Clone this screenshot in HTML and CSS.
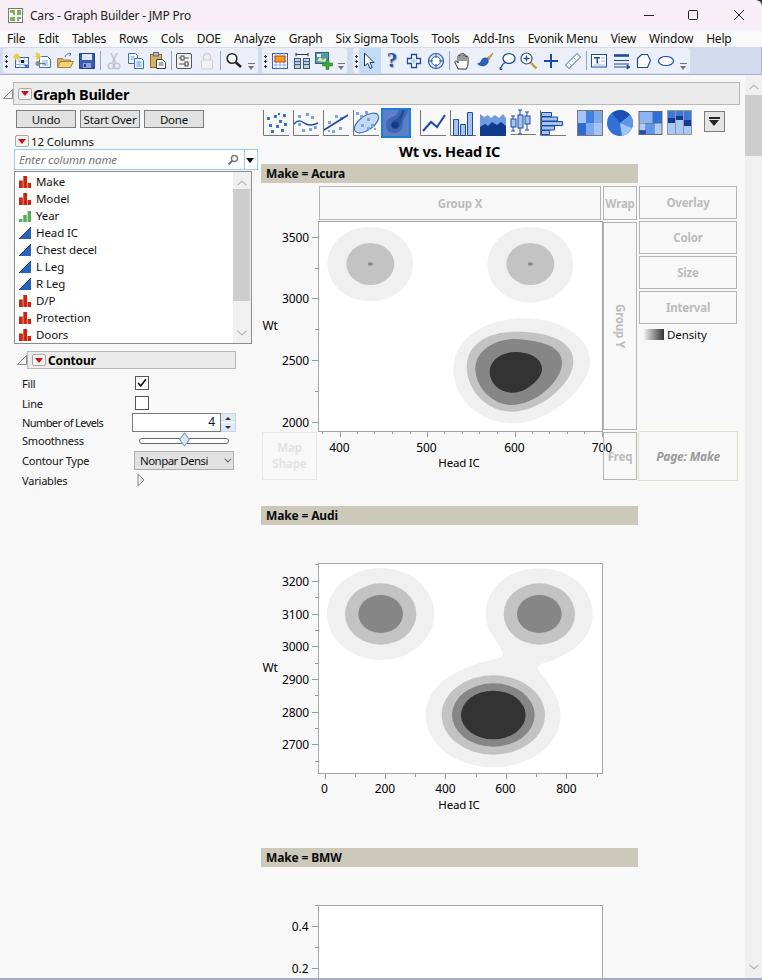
FILE: index.html
```html
<!DOCTYPE html>
<html lang="en">
<head>
<meta charset="utf-8">
<title>Cars - Graph Builder - JMP Pro</title>
<link rel="stylesheet" href="styles.css">
</head>
<body>
<svg class="defs" width="0" height="0" aria-hidden="true">
  <symbol id="nom" viewBox="0 0 12 12"><path d="M0 4.500h3.800V12H0zM4.300 0h3.800v12H4.300zM8.600 7H12v5H8.600z" fill="#c8260f"/></symbol>
  <symbol id="ord" viewBox="0 0 12 12"><path d="M0 9h3.500v3H0zM4.300 5h3.500v7H4.300zM8.600 1H12v11H8.600z" fill="#58b058"/></symbol>
  <symbol id="con" viewBox="0 0 12 12"><path d="M0 12 12 0v12z" fill="#2a62b8"/><path d="M0 12 12 0" stroke="#173f88" fill="none"/></symbol>
</svg>
<div class="window">
  <span class="corner"></span>
  <header class="titlebar">
    <svg class="appicon" viewBox="0 0 15 15"><rect x=".5" y=".5" width="14" height="14" fill="#fff" stroke="#777"/><path d="M2 2h5v5H5V5H2zM9 2h4v5H9zM2 9h5v4H2zM9 9h4v2h-2v2H9z" fill="#7db356"/></svg>
    <span class="titletext">Cars - Graph Builder - JMP Pro</span>
    <div class="winctl">
      <svg viewBox="0 0 10 10"><path d="M0 5.500h10" stroke="#222" fill="none"/></svg>
      <svg viewBox="0 0 10 10"><rect x=".5" y=".5" width="9" height="9" rx="1" stroke="#222" fill="none"/></svg>
      <svg viewBox="0 0 10 10"><path d="M0 0l10 10M10 0 0 10" stroke="#222" fill="none"/></svg>
    </div>
  </header>
  <nav class="menubar">
    <span>File</span><span>Edit</span><span>Tables</span><span>Rows</span><span>Cols</span><span>DOE</span><span>Analyze</span><span>Graph</span><span>Six Sigma Tools</span><span>Tools</span><span>Add-Ins</span><span>Evonik Menu</span><span>View</span><span>Window</span><span>Help</span>
  </nav>
  <div class="toolbar">
    <div class="seg seg1">
      <i class="grip"></i>
      <span class="slot"><svg class="ti" viewBox="0 0 18 18"><rect x="3.500" y="5.500" width="13" height="10" fill="#fff" stroke="#2a5fb5"/><path d="M3.500 9h13M3.500 12.500h13M8 5.500v10M12 5.500v10" stroke="#9cbce8"/><path d="M4 0l1 2.500 2.500-1L6.500 4l2.500 1-2.500 1 .5 2-2.500-1L3 8l-.5-2L0 5l2.500-1L2 1.500l2 1z" fill="#f2c83c"/><rect x="9" y="8" width="3" height="3" fill="#123"/><path d="M12 13l3 3 1-3z" fill="#2a5fb5"/></svg></span>
      <span class="slot"><svg class="ti" viewBox="0 0 18 18"><path d="M5.500 4.500h8l3 3v8h-11z" fill="#fff" stroke="#3a72c0"/><path d="M8 9h6M8 11h6M8 13h6" stroke="#7fa6e0"/><path d="M3 0l1 2 2-1-.5 2.500L8 4.500l-2.500 1L6 8 4 6.500 2 8l.5-2.500L0 4.500l2.500-1L2 1.500z" fill="#f2c83c"/><circle cx="4" cy="11.500" r="2.500" fill="#8c8c8c"/><path d="M5 11.500h6v2" stroke="#777" fill="none"/></svg></span>
      <span class="slot"><svg class="ti" viewBox="0 0 18 18"><path d="M1.500 6.500h5l1 1.500h7v7h-13z" fill="#d8b258" stroke="#a8843a"/><path d="M1.500 15.500l3-6h13l-3 6z" fill="#f0d27e" stroke="#a8843a"/><path d="M9 5c1-3 4-4 6-3M15 2l-1.500-1M15 2l-1.500 2" stroke="#3a72c0" fill="none"/></svg></span>
      <span class="slot"><svg class="ti" viewBox="0 0 18 18"><path d="M1.500 1.500h15v15h-15z" fill="#3c5cb0" stroke="#2a3f88"/><rect x="4" y="2" width="10" height="6" fill="#dfe6f6"/><rect x="5" y="11" width="8" height="5" fill="#8fa4d8"/><rect x="6" y="12" width="2" height="3" fill="#2a3f88"/></svg></span>
      <i class="sep"></i>
      <span class="slot"><svg class="ti" viewBox="0 0 18 18"><g stroke="#bcc3d2" stroke-width="1.600" fill="none"><path d="M6 1l4.500 10M12 1L7.500 11"/><circle cx="6" cy="14" r="2.800"/><circle cx="12" cy="14" r="2.800"/></g></svg></span>
      <span class="slot"><svg class="ti" viewBox="0 0 18 18"><path d="M1.500 1.500h7l2 2v8h-9z" fill="#fff" stroke="#3a72c0"/><path d="M7.500 6.500h7l2 2v8h-9z" fill="#eaf1fc" stroke="#3a72c0"/><path d="M9.500 10h5M9.500 12h5M9.500 14h5M3.500 5h4M3.500 7h3" stroke="#6d96d4"/></svg></span>
      <span class="slot"><svg class="ti" viewBox="0 0 18 18"><rect x="1.500" y="2.500" width="11" height="13" fill="#d9b45e" stroke="#8a6b28"/><rect x="4.500" y=".5" width="5" height="3.500" fill="#bbb" stroke="#666"/><path d="M7.500 7.500h6l3 3v6h-9z" fill="#fff" stroke="#3a3f50"/><path d="M9.500 11h5M9.500 13h5" stroke="#555"/></svg></span>
      <i class="sep"></i>
      <span class="slot"><svg class="ti" viewBox="0 0 18 18"><rect x=".5" y="1.500" width="15" height="15" rx="1.500" fill="#f2f2f2" stroke="#555"/><path d="M3 6h10M3 12h10" stroke="#555"/><rect x="5" y="4" width="3" height="4" fill="#fff" stroke="#444"/><rect x="9" y="10" width="3" height="4" fill="#fff" stroke="#444"/></svg></span>
      <span class="slot"><svg class="ti" viewBox="0 0 18 18"><path d="M5.500 8V5a3.500 3.500 0 0 1 7 0v3" stroke="#cfcfcf" stroke-width="1.400" fill="none"/><rect x="3.500" y="8" width="11" height="9" rx="1" fill="#f2f2f4" stroke="#cfcfcf"/></svg></span>
      <i class="sep"></i>
      <span class="slot"><svg class="ti" viewBox="0 0 18 18"><circle cx="7" cy="6.500" r="4.800" fill="#fff" stroke="#222" stroke-width="1.600"/><path d="M10.500 10l5.500 5" stroke="#222" stroke-width="2.400"/></svg></span>
      <span class="over"></span>
    </div>
    <div class="seg seg2">
      <i class="grip"></i>
      <span class="slot"><svg class="ti" viewBox="0 0 18 18"><rect x="1.500" y="1.500" width="15" height="15" fill="#fff" stroke="#2a5fb5"/><path d="M1.500 5h15M1.500 9h15M1.500 13h15M5 1.500v15M9 1.500v15M13 1.500v15" stroke="#8fb0e4"/><rect x="4" y="4" width="10" height="6" fill="#f0a020" stroke="#c83a18"/></svg></span>
      <span class="slot"><svg class="ti" viewBox="0 0 18 18"><path d="M3 2.500h12M3 .8v3.400M15 .8v3.400" stroke="#333" fill="none"/><rect x="1.500" y="6.500" width="6" height="10" fill="#b8d2ee" stroke="#44586e"/><rect x="10.500" y="6.500" width="6" height="10" fill="#b8d2ee" stroke="#44586e"/><path d="M2 9.500h5M2 12.500h5M11 9.500h5M11 12.500h5" stroke="#44586e"/></svg></span>
      <span class="slot"><svg class="ti" viewBox="0 0 18 18"><rect x=".5" y=".5" width="13" height="11" fill="#4f9bb0" stroke="#305f80"/><path d="M2 9l3-4 3 3 2-2 3 4z" fill="#e6f0a0"/><path d="M2 2h4v3H2z" fill="#fff"/><path d="M11 8h3v3h3.500v3H14v3.500h-3V14H7.500v-3H11z" fill="#3da63a" stroke="#1f6a1f" stroke-width=".5"/></svg></span>
      <span class="over"></span>
    </div>
    <div class="seg seg3">
      <i class="grip"></i>
      <span class="slot on"><svg class="ti" viewBox="0 0 18 18"><path d="M3.500 1v13l3.200-2.800 2.300 5.300 2.200-1-2.300-5h4.100z" fill="#fff" stroke="#15336e"/></svg></span>
      <span class="slot"><span class="qm">?</span></span>
      <span class="slot"><svg class="ti" viewBox="0 0 18 18"><path d="M6.500 2.500h5v4h4v5h-4v4h-5v-4h-4v-5h4z" fill="#fff" stroke="#1c4aa0" stroke-width="1.300"/><path d="M9 6v6M6 9h6" stroke="#9ab8e6"/></svg></span>
      <span class="slot"><svg class="ti" viewBox="0 0 18 18"><circle cx="9" cy="9" r="7.500" fill="#d8e4f6" stroke="#34609f" stroke-width="1.200"/><circle cx="9" cy="9" r="4.500" fill="#fff" stroke="#34609f"/><path d="M9 1v5M9 12v5M1 9h5M12 9h5" stroke="#34609f"/></svg></span>
      <i class="sep"></i>
      <span class="slot"><svg class="ti" viewBox="0 0 18 18"><path d="M4 17C3 14 .5 11 1 9.500s2.500 0 3 1.500V4c0-1 2-1 2 0V2.500c0-1 2-1 2 0V2c0-1 2-1 2 0v1.500c0-1 2-1 2 0V5c0-1 2-1 2 0v6c0 3-1 4-1.500 6z" fill="#fff" stroke="#333"/><path d="M6 4v5M8 3v6M10 3v6M12 4v5" stroke="#333" fill="none"/></svg></span>
      <span class="slot"><svg class="ti" viewBox="0 0 18 18"><path d="M17 1l-6 5 2 2z" fill="#e0a040" stroke="#9a6a20" stroke-width=".5"/><path d="M12 6.500c-2-2-6-1-7 2-.5 2-2.500 3-4 3 2 3 7 4 10 1 2-2 2-4 1-6z" fill="#2a62b8"/></svg></span>
      <span class="slot"><svg class="ti" viewBox="0 0 18 18"><ellipse cx="11" cy="6.500" rx="6" ry="4.800" fill="#fff" stroke="#1c4aa0" stroke-width="1.300"/><path d="M7 10.500c-2 1-3 2-4 5M3 15.500a1 1 0 1 0 1 1" stroke="#1c4aa0" stroke-width="1.300" fill="none"/></svg></span>
      <span class="slot"><svg class="ti" viewBox="0 0 18 18"><circle cx="6.500" cy="6.500" r="5.500" fill="#fff" stroke="#34507f" stroke-width="1.200"/><path d="M3.500 6.500h6M6.500 3.500v6" stroke="#1c4aa0" stroke-width="1.300"/><path d="M10.500 10.500l6 6" stroke="#c89a30" stroke-width="2.400"/></svg></span>
      <span class="slot"><svg class="ti" viewBox="0 0 18 18"><path d="M9 2v14M2 9h14" stroke="#1c4aa0" stroke-width="2"/></svg></span>
      <span class="slot"><svg class="ti" viewBox="0 0 18 18"><path d="M13 1.500l3.500 3.500L5 16.500 1.500 13z" fill="#fff" stroke="#34609f"/><path d="M10 6l2 2M7.500 8.500l2 2M5 11l2 2" stroke="#9ab8e6"/></svg></span>
      <i class="sep"></i>
      <span class="slot"><svg class="ti" viewBox="0 0 18 18"><rect x=".5" y="2.500" width="15" height="12.500" fill="#fff" stroke="#1c4aa0"/><path d="M3 5h6v1.500H7v5H5.500v-5H3z" fill="#1c4aa0"/><path d="M10 6h4M10 9h4M3 13h11" stroke="#9ab8e6"/></svg></span>
      <span class="slot"><svg class="ti" viewBox="0 0 18 18"><path d="M1 3.500h15" stroke="#1c4aa0" stroke-width="2.600"/><path d="M1 8.500h15M1 12h15M1 15h12M14 13l3 2-3 2z" stroke="#1c4aa0" fill="#1c4aa0"/></svg></span>
      <span class="slot"><svg class="ti" viewBox="0 0 18 18"><path d="M2.500 6.500l4-4h6l3 6-3 7h-10z" fill="#fff" stroke="#1c4aa0" stroke-width="1.200"/></svg></span>
      <span class="slot"><svg class="ti" viewBox="0 0 18 18"><ellipse cx="9" cy="9" rx="7.500" ry="4.500" fill="#fff" stroke="#1c4aa0" stroke-width="1.200"/></svg></span>
      <span class="over"></span>
    </div>
  </div>

  <div class="client">
    <main class="report">
      <div class="outline gbhead">
        <svg class="disc" viewBox="0 0 10 10"><path d="M.5 9.500 9.500.5v9z" fill="none" stroke="#8a8a8a"/></svg>
        <div class="obar gbbar"><span class="redbtn"></span><b>Graph Builder</b></div>
      </div>
      <div class="gbbody">
        <aside class="side">
          <div class="btnrow"><span class="btn">Undo</span><span class="btn">Start Over</span><span class="btn">Done</span></div>
          <div class="colhead"><span class="redbtn"></span><span>12 Columns</span></div>
          <div class="searchrow">
            <div class="search"><span>Enter column name</span><svg viewBox="0 0 12 12"><circle cx="7.500" cy="4.500" r="3" fill="none" stroke="#777" stroke-width="1.400"/><path d="M5.500 6.500 1.500 10.500" stroke="#777" stroke-width="2"/></svg></div>
            <div class="searchdrop"></div>
          </div>
          <div class="collist">
            <ul class="cols">
              <li><svg><use href="#nom"/></svg>Make</li>
              <li><svg><use href="#nom"/></svg>Model</li>
              <li><svg><use href="#ord"/></svg>Year</li>
              <li><svg><use href="#con"/></svg>Head IC</li>
              <li><svg><use href="#con"/></svg>Chest decel</li>
              <li><svg><use href="#con"/></svg>L Leg</li>
              <li><svg><use href="#con"/></svg>R Leg</li>
              <li><svg><use href="#nom"/></svg>D/P</li>
              <li><svg><use href="#nom"/></svg>Protection</li>
              <li><svg><use href="#nom"/></svg>Doors</li>
            </ul>
            <div class="colscroll"><span class="chev up"></span><span class="thumb"></span><span class="chev dn"></span></div>
          </div>
          <div class="outline conhead">
            <svg class="disc" viewBox="0 0 10 10"><path d="M.5 9.500 9.500.5v9z" fill="none" stroke="#8a8a8a"/></svg>
            <div class="obar conbar"><span class="redbtn"></span><b>Contour</b></div>
          </div>
          <div class="conform">
            <span>Fill</span><span class="check on"><svg viewBox="0 0 14 14"><path d="M2.500 7l3 3.500 6-8" fill="none" stroke="#111" stroke-width="2"/></svg></span>
            <span>Line</span><span class="check"></span>
            <span class="tight">Number of Levels</span><div class="numrow"><span class="num">4</span><span class="spin"><i class="sup"></i><i class="sdn"></i></span></div>
            <span>Smoothness</span><div class="slider"><i class="diamond"></i></div>
            <span>Contour Type</span><div class="combo"><span>Nonpar Densi</span><span class="chev dn2"></span></div>
            <span>Variables</span><svg class="vartri" viewBox="0 0 8 14"><path d="M1 1l6 6-6 6z" fill="#f4f4f4" stroke="#888"/></svg>
          </div>
        </aside>

        <section class="graph">
          <div class="iconrow">
            <span class="gi"><svg viewBox="0 0 26 26"><path d="M.5 0v25.500H26" class="ax"/><path d="M6 14h3v3H6zM11 5h3v3h-3zM16 10h3v3h-3zM20 4h3v3h-3zM4 7h3v3H4zM13 15h3v3h-3zM8 20h3v3H8zM18 19h3v3h-3zM21 13h3v3h-3zM15 3h2v2h-2z" fill="#3a72c8"/></svg></span>
            <span class="gi"><svg viewBox="0 0 26 26"><path d="M.5 0v25.500H26" class="ax"/><path d="M5 13h3v3H5zM13 3h3v3h-3zM18 6h3v3h-3zM9 19h3v3H9zM16 18h3v3h-3zM21 16h3v3h-3zM5 5h3v3H5z" fill="#7fa6e0"/><path d="M1 14c5-6 8-2 12 0s8 1 12-1" fill="none" stroke="#1c4aa0" stroke-width="1.400"/></svg></span>
            <span class="gi"><svg viewBox="0 0 26 26"><path d="M.5 0v25.500H26" class="ax"/><path d="M5 11h3v3H5zM12 5h3v3h-3zM17 7h3v3h-3zM9 20h3v3H9zM16 17h3v3h-3zM5 20h2v2H5z" fill="#7fa6e0"/><path d="M1 20 25 5" stroke="#1c4aa0" stroke-width="1.800"/></svg></span>
            <span class="gi"><svg viewBox="0 0 26 26"><path d="M.5 0v25.500H26" class="ax"/><ellipse cx="13.500" cy="13" rx="14" ry="7" transform="rotate(-35 13.500 13)" fill="#c5d8f4" stroke="#3a72c8" stroke-width="1.200"/><path d="M3 2h3v3H3zM12 1h3v3h-3zM7 5h3v3H7zM14 8h3v3h-3zM8 14h3v3H8zM14 17h3v3h-3zM18 14h3v3h-3zM21 18h2v2h-2z" fill="#7fa6e0"/></svg></span>
            <span class="gi sel"><svg viewBox="0 0 26 26"><rect width="26" height="26" fill="#5c7fc6"/><path d="M3 15c0-5 4-8 9-9 2-2 3-4 4-6h9c-1 5-4 8-5 12 0 5-2 11-8 11s-9-3-9-8z" fill="#3f67b6"/><path d="M19 0c-1 4-3 6-5 9-4 1-6 3-6 6s3 5 6 4 3-5 4-8c1-4 3-7 4-11z" fill="#274f9e"/><ellipse cx="12" cy="15" rx="3.500" ry="3" fill="#123a88"/></svg></span>
            <span class="gi g2"><svg viewBox="0 0 26 26"><path d="M.5 0v25.500H26" class="ax"/><path d="M3 21l8-9 6 5L25 5" fill="none" stroke="#1c4aa0" stroke-width="2"/></svg></span>
            <span class="gi"><svg viewBox="0 0 26 26"><path d="M.5 0v25.500H26" class="ax"/><path d="M3.500 9.500h5v16h-5zM10.500 14.500h5v11h-5zM17.500 2.500h5v23h-5z" fill="#a5c3ee" stroke="#1c4aa0"/></svg></span>
            <span class="gi"><svg viewBox="0 0 26 26"><path d="M0 4l4 3 4-2 3 3 4-3 4 3 4-4 3 4v18H0z" fill="#6f9be0"/><path d="M0 17l5-3 3 2 4-4 5 3 4-3 5 4v10H0z" fill="#103a8c"/></svg></span>
            <span class="gi"><svg viewBox="0 0 26 26"><path d="M.5 24.500H26" class="ax"/><path d="M3 6v15M10 0v24M17 2v18" stroke="#1c4aa0"/><path d="M1 6h4M1 21h4M8 0h4M8 24h4M15 2h4M15 20h4" stroke="#1c4aa0"/><rect x="1" y="9" width="5" height="8" fill="#a5c3ee" stroke="#1c4aa0"/><rect x="8" y="5" width="5" height="13" fill="#a5c3ee" stroke="#1c4aa0"/><rect x="15" y="6" width="5" height="8" fill="#a5c3ee" stroke="#1c4aa0"/></svg></span>
            <span class="gi"><svg viewBox="0 0 26 26"><path d="M.5 0v25.500H26" class="ax"/><path d="M1.500 2.500h10v4h-10zM1.500 7h16v4h-16zM1.500 11.500h21v4h-21zM1.500 16h13v4h-13zM1.500 20.500h8v4h-8z" fill="#a5c3ee" stroke="#1c4aa0"/></svg></span>
            <span class="gi g3"><svg viewBox="0 0 26 26"><rect width="26" height="26" fill="#777"/><path d="M1 1h8v12H1z" fill="#a5c3f4"/><path d="M9 1h8v12H9z" fill="#3f80e0"/><path d="M17 1h8v12h-8z" fill="#7fa8e8"/><path d="M1 13h8v12H1z" fill="#2f6ad0"/><path d="M9 13h8v12H9z" fill="#7fa8ec"/><path d="M17 13h8v12h-8z" fill="#a5c3f4"/></svg></span>
            <span class="gi"><svg viewBox="0 0 26 26"><circle cx="13" cy="13" r="13" fill="#3272d8"/><path d="M13 13 5 3A13 13 0 0 1 23 5z" fill="#1c50b4"/><path d="M13 13 23 5a13 13 0 0 1 2 13z" fill="#5c96e4"/><path d="M13 13l12 5A13 13 0 0 1 15 26z" fill="#a0c4f4"/></svg></span>
            <span class="gi g4"><svg viewBox="0 0 24 24"><rect width="24" height="24" fill="#666"/><path d="M1 1h13v11H1z" fill="#8cb4f0"/><path d="M14.500 1H23v11h-8.500z" fill="#2f70d8"/><path d="M1 12.500h6V19H1z" fill="#b0ccf4"/><path d="M1 19.500h6V23H1z" fill="#1c50b4"/><path d="M7.500 12.500h8V23h-8z" fill="#5c96f0"/><path d="M16 12.500h7V23h-7z" fill="#b0ccf4"/></svg></span>
            <span class="gi g5"><svg viewBox="0 0 25 25"><rect width="25" height="25" fill="#999"/><path d="M1 1h7v23H1zM9 1h7v23H9zM17 1h7v23h-7z" fill="#a8c8f8"/><path d="M1 1h7v7H1zM9 1h7v5H9zM17 1h7v9h-7z" fill="#3d78dc"/><path d="M1 8h7v5H1zM9 6h7v4H9zM17 10h7v6h-7z" fill="#0f3a96"/></svg></span>
            <span class="ddbtn"></span>
          </div>
          <h1 class="gtitle">Wt vs. Head IC</h1>

          <article class="page">
            <div class="bar">Make = Acura</div>
            <div class="plotgrid">
              <div class="zone gx">Group X</div>
              <div class="zone wrap">Wrap</div>
              <div class="rightcol">
                <div class="zone rz">Overlay</div>
                <div class="zone rz">Color</div>
                <div class="zone rz">Size</div>
                <div class="zone rz">Interval</div>
                <div class="legend"><i></i><span>Density</span></div>
              </div>
              <svg class="plot" viewBox="261 222 342 258">
                <rect class="field" x="318.500" y="221.500" width="284" height="210"/>
                <g transform="translate(260 220) scale(.33333)">
                  <ellipse class="c1" cx="331" cy="132" rx="129" ry="112"/>
                  <ellipse class="c2" cx="331" cy="132" rx="72" ry="63"/>
                  <ellipse class="c3" cx="331" cy="132" rx="8" ry="5"/>
                  <ellipse class="c1" cx="811" cy="134" rx="129" ry="114"/>
                  <ellipse class="c2" cx="811" cy="132" rx="72" ry="63"/>
                  <ellipse class="c3" cx="811" cy="132" rx="8" ry="5"/>
                  <path class="c1" d="M580 445C580 360 670 295 790 295 900 295 990 350 990 425 990 500 870 610 760 610 660 610 580 540 580 445Z"/>
                  <path class="c2" d="M620 440C620 385 665 335 770 335 870 335 940 365 940 425 940 490 840 575 755 575 680 575 620 510 620 440Z"/>
                  <path class="c3" d="M646 445C646 395 700 357 765 357 840 362 906 375 906 430 906 480 830 555 755 555 695 555 646 500 646 445Z"/>
                  <path class="c4" d="M689 455C689 420 725 396 765 396 810 396 846 415 846 448 846 475 800 518 760 518 720 518 689 490 689 455Z"/>
                  <path class="ticks" d="M157 52h18M157 236h18M157 421h18M157 607h18M165 145h10M165 328h10M165 514h10M241 633v18M502 633v18M766 633v18M1028 633v18M188 633v10M293 633v10M345 633v10M397 633v10M451 633v10M555 633v10M607 633v10M660 633v10M712 633v10M818 633v10M870 633v10M922 633v10M975 633v10"/>
                </g>
                <rect class="frame" x="318.500" y="221.500" width="284" height="210"/>
                <g class="yl"><text x="309" y="241.500">3500</text><text x="309" y="303">3000</text><text x="309" y="364.500">2500</text><text x="309" y="426.500">2000</text></g>
                <g class="xl"><text x="339.500" y="451.500">400</text><text x="426.500" y="451.500">500</text><text x="514.500" y="451.500">600</text><text x="602" y="451.500">700</text><text class="axt" x="459" y="467">Head IC</text></g>
                <text class="wt" x="270" y="330">Wt</text>
              </svg>
              <div class="zone map">Map<br>Shape</div>
              <div class="zone freq">Freq</div>
              <div class="zone pg">Page: Make</div>
              <div class="zone gy"><span>Group Y</span></div>
            </div>
          </article>

          <article class="page">
            <div class="bar">Make = Audi</div>
            <div class="plotgrid">
              <svg class="plot" viewBox="261 564 342 258">
                <rect class="field" x="318.500" y="563.500" width="284" height="210"/>
                <g transform="translate(260 555) scale(.33333)">
                  <ellipse class="c1" cx="362" cy="177" rx="161" ry="138"/>
                  <ellipse class="c2" cx="362" cy="177" rx="107" ry="92"/>
                  <ellipse class="c3" cx="362" cy="177" rx="67" ry="57"/>
                  <path class="c1" d="M838 40C930 40 998 100 998 177 998 255 930 300 850 325 835 330 830 340 838 350 870 390 902 430 902 480 902 570 810 637 700 637 590 637 497 570 497 480 497 390 590 335 715 310 730 305 732 295 722 280 700 245 677 220 677 177 677 100 745 40 838 40Z"/>
                  <ellipse class="c2" cx="838" cy="177" rx="107" ry="92"/>
                  <ellipse class="c3" cx="838" cy="177" rx="67" ry="57"/>
                  <ellipse class="c2" cx="700" cy="480" rx="155" ry="119"/>
                  <ellipse class="c3" cx="700" cy="480" rx="124" ry="95"/>
                  <ellipse class="c4" cx="700" cy="480" rx="97" ry="73"/>
                  <path class="ticks" d="M157 79h18M157 178h18M157 274h18M157 373h18M157 472h18M157 569h18M165 30h10M165 128h10M165 226h10M165 325h10M165 422h10M165 520h10M165 619h10M197 655v18M377 655v18M558 655v18M739 655v18M921 655v18M287 655v10M467 655v10M649 655v10M829 655v10M1012 655v10"/>
                </g>
                <rect class="frame" x="318.500" y="563.500" width="284" height="210"/>
                <g class="yl"><text x="309" y="585.500">3200</text><text x="309" y="618.500">3100</text><text x="309" y="650.500">3000</text><text x="309" y="683.500">2900</text><text x="309" y="716.500">2800</text><text x="309" y="749">2700</text></g>
                <g class="xl"><text x="324.500" y="792.500">0</text><text x="385" y="792.500">200</text><text x="445.500" y="792.500">400</text><text x="505.500" y="792.500">600</text><text x="566.500" y="792.500">800</text><text class="axt" x="459" y="809">Head IC</text></g>
                <text class="wt" x="270" y="672">Wt</text>
              </svg>
            </div>
          </article>

          <article class="page">
            <div class="bar">Make = BMW</div>
            <div class="plotgrid">
              <svg class="plot" viewBox="261 906 342 258">
                <rect class="field" x="318.500" y="905.500" width="284" height="210"/>
                <g transform="translate(260 840) scale(.33333)">
                  <path class="ticks" d="M165 196h10M157 259h18M165 322h10M157 385h18"/>
                </g>
                <rect class="frame" x="318.500" y="905.500" width="284" height="210"/>
                <g class="yl"><text x="308.500" y="930.500">0.4</text><text x="308.500" y="972.500">0.2</text></g>
              </svg>
            </div>
          </article>
        </section>
      </div>
    </main>
    <div class="vscroll"><span class="chev up"></span><span class="thumb"></span><span class="chev dn"></span></div>
  </div>
</div>
</body>
</html>
```
FILE: styles.css
```css
* { box-sizing: border-box; }
html, body { margin: 0; height: 100%; overflow: hidden; }
body { font-family: "Noto Sans", "Open Sans", sans-serif; font-size: 12px; color: #111; background: #f8f8f8; }
.defs { position: absolute; }
.window { position: relative; width: 762px; height: 980px; display: flex; flex-direction: column; overflow: hidden; }
.corner { position: absolute; top: 0; right: 0; width: 5px; height: 5px; background: radial-gradient(circle at 0 100%, transparent 4px, #333 5px); z-index: 2; }

.titlebar { height: 30px; flex: none; display: flex; align-items: center; padding-left: 8px; background: #f8eff6; }
.appicon { width: 15px; height: 15px; }
.titletext { margin-left: 7px; letter-spacing: -.22px; color: #222; }
.winctl { margin-left: auto; display: flex; gap: 34px; padding-right: 18px; }
.winctl svg { width: 10px; height: 10px; overflow: visible; }
.winctl svg:last-child { margin-left: 2px; }

.menubar { height: 17px; flex: none; display: flex; align-items: center; gap: 13.100px; padding-left: 7px; background: #f9f9f9; }
.menubar span { letter-spacing: -.24px; white-space: nowrap; }

.toolbar { height: 28px; flex: none; display: flex; align-items: center; padding-left: 3px; gap: 4px; background: #d3dbee; border-bottom: 1px solid #a7aecb; border-right: 1px solid #a7aecb; }
.seg { height: 25px; display: flex; align-items: center; background: #eaeff9; border-radius: 3px; }
.seg1 { width: 255px; }
.seg2 { width: 85px; }
.seg3 { width: 337px; margin-left: 2px; }
.grip { width: 7px; height: 14px; flex: none; background: radial-gradient(circle, #333 1px, transparent 1.2px) 2px 0 / 3px 5px repeat-y; }
.seg3 .grip { width: 6px; }
.slot { width: 22px; height: 25px; flex: none; display: flex; align-items: center; justify-content: center; }
.slot.on { background: #c2dcf7; }
.ti { width: 18px; height: 18px; overflow: visible; }
.sep { width: 5px; height: 19px; flex: none; background: linear-gradient(#9aa3b8, #9aa3b8) center / 1px 100% no-repeat; }
.over { width: 13px; flex: none; height: 8px; margin-top: 12px; position: relative; }
.over::before { content: ""; position: absolute; left: 3px; top: 0; width: 7px; height: 1px; background: #777; }
.over::after { content: ""; position: absolute; left: 3px; top: 3px; border: 3.500px solid transparent; border-top: 4px solid #777; border-bottom: 0; }
.qm { font: bold 21px/1 "Liberation Serif", serif; color: #1e57ac; text-shadow: 1px 1px 0 #aab; }

.client { flex: 1; min-height: 0; display: flex; border-bottom: 2px solid #a7aac4; }
.report { width: 745px; flex: none; padding-top: 7px; overflow: hidden; }
.vscroll { width: 17px; flex: none; background: #f0f0f0; display: flex; flex-direction: column; align-items: center; }
.vscroll .chev.up { margin-top: 8px; }
.vscroll .thumb { display: block; align-self: stretch; height: 61px; margin-top: 6px; background: #cdcdcd; }
.vscroll .chev.dn { margin-top: auto; margin-bottom: 7px; }
.chev { display: block; width: 6px; height: 6px; flex: none; }
.chev.up { border-left: 1px solid #b4b4b4; border-top: 1px solid #b4b4b4; transform: scaleX(1.15) rotate(45deg) translate(2px, 2px); }
.chev.dn { border-right: 1px solid #b4b4b4; border-bottom: 1px solid #b4b4b4; transform: scaleX(1.15) rotate(45deg) translate(-2px, -2px); }

.outline { display: flex; align-items: center; }
.disc { width: 10px; height: 10px; flex: none; }
.gbhead { padding-left: 3px; height: 23px; }
.obar { display: flex; align-items: center; background: #ebebeb; border: 1px solid #b8b8b8; height: 100%; padding-left: 4px; }
.gbbar { width: 727px; }
.gbbar b { font-size: 14.500px; letter-spacing: -.28px; margin-left: 1px; color: #000; }
.redbtn { position: relative; display: inline-block; flex: none; width: 14px; height: 12px; background: #f3f3f3; border: 1px solid #a8a8a8; border-radius: 2px; }
.redbtn::after { content: ""; position: absolute; left: 2px; top: 2.500px; border: 4px solid transparent; border-top: 5px solid #d20f0f; border-bottom: 0; }

.gbbody { display: flex; margin-top: 4px; }
.side { width: 260px; flex: none; padding-left: 14px; }
.btnrow { display: flex; gap: 4px; padding: 1px 0 0 2px; }
.btn { width: 60px; height: 18px; display: flex; align-items: center; justify-content: center; background: #e1e1e1; border: 1px solid #7d7d7d; font-size: 11.500px; letter-spacing: -.2px; white-space: nowrap; }
.colhead { display: flex; align-items: center; height: 16px; margin-top: 5px; gap: 2px; padding-left: 1px; font-size: 11.500px; }
.colhead span:last-child { letter-spacing: -.1px; }
.searchrow { display: flex; height: 21px; width: 244px; }
.search { flex: 1; display: flex; align-items: center; justify-content: space-between; padding: 0 5px 0 4px; border: 1px solid #9bcbe8; background: #fff; font-size: 11.500px; font-style: italic; color: #777; letter-spacing: -.1px; }
.search svg { width: 12px; height: 12px; }
.searchdrop { width: 13px; flex: none; border: 1px solid #9bcbe8; border-left: 0; background: #fff; position: relative; }
.searchdrop::after { content: ""; position: absolute; left: 1px; top: 8px; border: 4px solid transparent; border-top: 5px solid #111; border-bottom: 0; }
.collist { width: 238px; height: 173px; margin-top: 1px; display: flex; border: 1px solid #8c8c8c; background: #fff; }
.cols { flex: 1; margin: 0; padding: 1px 0 0 4px; list-style: none; }
.cols li { height: 17px; display: flex; align-items: center; gap: 5px; font-size: 11.500px; letter-spacing: -.1px; }
.cols svg { width: 12px; height: 12px; flex: none; }
.colscroll { width: 18px; flex: none; background: #f0f0f0; display: flex; flex-direction: column; align-items: center; }
.colscroll .chev.up { margin-top: 7px; }
.colscroll .thumb { display: block; align-self: stretch; margin: 4px 1px 0 0; height: 112px; background: #cdcdcd; }
.colscroll .chev.dn { margin-top: auto; margin-bottom: 6px; }

.conhead { margin-top: 7px; padding-left: 3px; height: 18px; }
.conbar { width: 209px; }
.conbar b { margin-left: 2px; font-size: 12px; letter-spacing: -.15px; color: #000; }
.conform { display: grid; grid-template-columns: 108px 1fr; grid-template-rows: 20px 20px 19px 17px 22px 18px; align-items: center; padding: 4px 0 0 8px; font-size: 11px; letter-spacing: -.2px; }
.tight { letter-spacing: -.6px; white-space: nowrap; }
.check { width: 14px; height: 14px; margin-left: 5px; background: #fff; border: 1px solid #555; display: block; }
.check svg { display: block; width: 12px; height: 12px; }
.numrow { display: flex; margin-left: 2px; height: 19px; }
.num { width: 89px; background: #fff; border: 1px solid #777; text-align: right; padding-right: 5px; font-size: 12px; line-height: 16px; }
.spin { width: 15px; display: flex; flex-direction: column; border: 1px solid #c0d4ea; border-left: 0; background: #dfe9f5; }
.spin i { flex: 1; position: relative; }
.sup { border-bottom: 1px solid #fff; }
.sup::after, .sdn::after { content: ""; position: absolute; left: 4px; top: 3px; border: 3px solid transparent; }
.sup::after { border-bottom: 3px solid #333; border-top: 0; }
.sdn::after { border-top: 3px solid #333; border-bottom: 0; }
.slider { position: relative; margin-left: 9px; width: 90px; height: 6px; background: #fff; border: 1px solid #666; border-radius: 3px; }
.diamond { position: absolute; left: 40px; top: -4px; width: 9px; height: 9px; background: #dbe8f7; border: 1px solid #7a94b5; transform: rotate(45deg) skew(8deg, 8deg); }
.combo { margin-left: 4px; width: 100px; height: 19px; display: flex; align-items: center; justify-content: space-between; padding: 0 4px 0 5px; background: #e1e1e1; border: 1px solid #adadad; font-size: 11.500px; letter-spacing: -.55px; overflow: hidden; white-space: nowrap; }
.chev.dn2 { width: 5px; height: 5px; border-right: 1px solid #555; border-bottom: 1px solid #555; transform: rotate(45deg) translateY(-2px); }
.vartri { width: 8px; height: 14px; margin-left: 7px; }

.graph { width: 484px; flex: none; padding-left: 1px; }
.iconrow { display: flex; align-items: flex-start; height: 28px; margin-top: 1px; padding-left: 2px; }
.gi { width: 26px; height: 26px; margin-right: 4px; flex: none; }
.gi svg { display: block; width: 100%; height: 100%; overflow: visible; }
.ax { fill: none; stroke: #777; }
.gi.sel { width: 30px; height: 30px; margin: -2px 9px 0 -2px; padding: 2px; box-shadow: inset 0 0 0 2px #1a7ed8; }
.gi.g3 { margin-left: 7px; }
.gi.g4 { width: 25px; height: 24px; margin: 1px 4px 0 1px; }
.gi.g5 { width: 25px; height: 25px; margin: 0; }
.ddbtn { width: 21px; height: 21px; margin: 1px 0 0 12px; flex: none; background: #e4e4e4; border: 1px solid #7d7d7d; position: relative; }
.ddbtn::before { content: ""; position: absolute; left: 4px; top: 5px; width: 11px; height: 2px; background: #222; }
.ddbtn::after { content: ""; position: absolute; left: 4px; top: 8px; border: 5.500px solid transparent; border-top: 6px solid #222; border-bottom: 0; }
.gtitle { margin: 0; height: 26px; width: 377px; text-align: center; font-size: 14.500px; line-height: 26px; letter-spacing: -.2px; color: #000; }

.page { height: 342px; width: 480px; }
.bar { height: 19px; width: 377px; background: #ccc9ba; padding-left: 5px; font-weight: 700; line-height: 20px; font-size: 12px; letter-spacing: -.15px; color: #0a0a0a; }
.plotgrid { display: grid; grid-template-columns: 58px 284px 36px 99px; grid-template-rows: 36px 210px 48px; margin-top: 3px; }
.zone { display: flex; align-items: center; justify-content: center; text-align: center; border: 1px solid #b4b4b4; background: #f8f8f8; color: #bcbcbc; font-weight: 700; font-size: 11.500px; letter-spacing: -.2px; }
.gx { grid-column: 2; grid-row: 1; margin: 0 2px 2px 0; }
.wrap { grid-column: 3; grid-row: 1; margin: 0 2px 2px 0; overflow: hidden; }
.gy { grid-column: 3; grid-row: 2; margin: 0 2px 2px 0; }
.gy span { writing-mode: vertical-rl; }
.rightcol { grid-column: 4; grid-row: 1 / span 2; display: flex; flex-direction: column; gap: 2px; }
.rz { height: 33px; margin-right: 1px; }
.legend { display: flex; align-items: center; gap: 3px; height: 16px; padding-left: 5px; font-size: 11.500px; letter-spacing: -.1px; }
.legend i { width: 20px; height: 11px; background: linear-gradient(90deg, #f0f0f0, #333); }
.plot { grid-column: 1 / span 2; grid-row: 2 / span 2; width: 342px; height: 258px; overflow: visible; font-family: "Noto Sans", "Open Sans", sans-serif; font-size: 12px; }
.map { grid-column: 1; grid-row: 3; margin: 0 2px 0 1px; border-color: #e6e6e6; color: #e4e4e4; line-height: 16px; position: relative; }
.freq { grid-column: 3; grid-row: 3; margin-right: 2px; position: relative; background: transparent; }
.pg { grid-column: 4; grid-row: 3; margin: -1px 0 -1px -1px; border-color: #dedecf; color: #9a9a9a; font-style: italic; font-size: 12px; }
.field { fill: #fff; stroke: none; }
.frame { fill: none; stroke: #a6a6a6; shape-rendering: crispEdges; }
.c1 { fill: #f0f0f0; }
.c2 { fill: #c3c3c3; }
.c3 { fill: #868686; }
.c4 { fill: #333; }
.ticks { fill: none; stroke: #9a9a9a; stroke-width: 3; shape-rendering: crispEdges; }
.yl text { text-anchor: end; letter-spacing: -.1px; }
.xl text { text-anchor: middle; letter-spacing: -.1px; }
.xl .axt { font-size: 11.500px; letter-spacing: -.2px; }
.wt { text-anchor: middle; letter-spacing: -.2px; }
```
